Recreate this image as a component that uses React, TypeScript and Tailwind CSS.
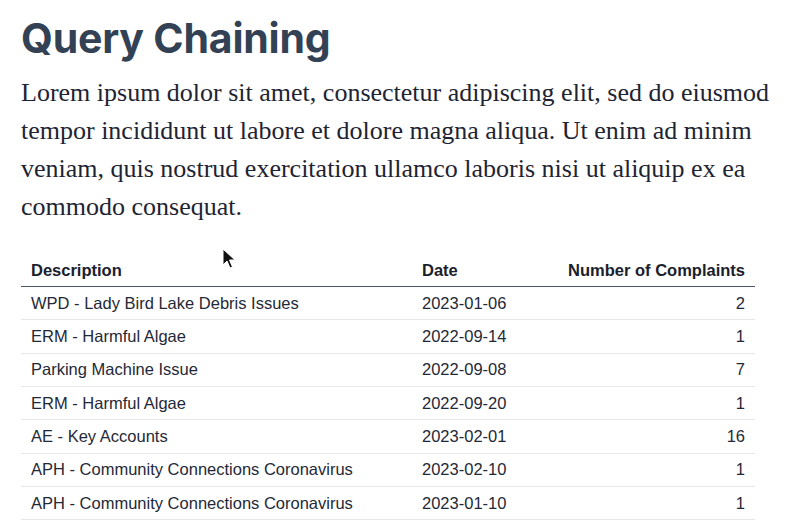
import React from 'react';

const rows = [
  { desc: 'WPD - Lady Bird Lake Debris Issues', date: '2023-01-06', count: 2 },
  { desc: 'ERM - Harmful Algae', date: '2022-09-14', count: 1 },
  { desc: 'Parking Machine Issue', date: '2022-09-08', count: 7 },
  { desc: 'ERM - Harmful Algae', date: '2022-09-20', count: 1 },
  { desc: 'AE - Key Accounts', date: '2023-02-01', count: 16 },
  { desc: 'APH - Community Connections Coronavirus', date: '2023-02-10', count: 1 },
  { desc: 'APH - Community Connections Coronavirus', date: '2023-01-10', count: 1 },
];

export default function App() {
  return (
    <div className="relative h-[530px] w-[800px] overflow-hidden bg-white pl-[21px] pt-[14px]">
      <h1 className="font-['Inter',sans-serif] text-[41px] font-bold leading-[48px] tracking-[-0.2px] text-[#334155]">
        Query Chaining
      </h1>

      <p className="mt-[12px] whitespace-nowrap font-['Liberation_Serif',serif] text-[26px] leading-[38px] text-[#1e2433]">
        Lorem ipsum dolor sit amet, consectetur adipiscing elit, sed do eiusmod
        <br />
        tempor incididunt ut labore et dolore magna aliqua. Ut enim ad minim
        <br />
        veniam, quis nostrud exercitation ullamco laboris nisi ut aliquip ex ea
        <br />
        commodo consequat.
      </p>

      <div className="mt-[28px] w-[734px] font-['Liberation_Sans',sans-serif] text-[16.5px] text-[#1f2937]">
        <div className="flex h-[33px] items-center border-b border-[#4b5563] font-bold text-[#1a202c]">
          <div className="w-[391px] px-[10px]">Description</div>
          <div className="flex-1 px-[10px]">Date</div>
          <div className="px-[10px] text-right">Number of Complaints</div>
        </div>
        {rows.map((r, i) => (
          <div key={i} className="flex h-[33.33px] items-center border-b border-[#e5e7eb]">
            <div className="w-[391px] px-[10px]">{r.desc}</div>
            <div className="flex-1 px-[10px]">{r.date}</div>
            <div className="px-[10px] text-right">{r.count}</div>
          </div>
        ))}
      </div>

      <svg
        className="absolute left-[222px] top-[248px]"
        width="14"
        height="22"
        viewBox="0 0 14 22"
      >
        <path
          d="M1 1 L1 17 L5 13 L8 20 L10.5 19 L7.5 12 L13 12 Z"
          fill="#111"
          stroke="#fff"
          strokeWidth="1"
          strokeLinejoin="round"
        />
      </svg>
    </div>
  );
}
